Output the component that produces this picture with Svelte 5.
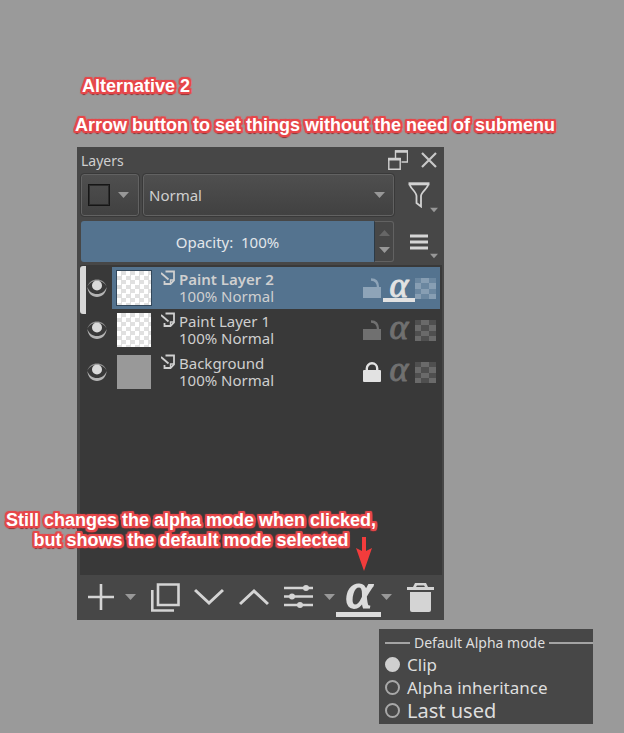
<script>
    let blendMode = $state('Normal');
    let opacity = $state(100);
    let selected = $state(2);
    let defaultMode = $state('clip');

    const blendModes = ['Normal', 'Multiply', 'Screen', 'Overlay'];

    let layers = $state([
        { id: 2, name: 'Paint Layer 2', visible: true, locked: false, alpha: true, fill: 'empty' },
        { id: 1, name: 'Paint Layer 1', visible: true, locked: false, alpha: false, fill: 'empty' },
        { id: 0, name: 'Background', visible: true, locked: true, alpha: false, fill: 'solid' }
    ]);

    const alphaModes = [
        { value: 'clip', label: 'Clip' },
        { value: 'inherit', label: 'Alpha inheritance' },
        { value: 'last', label: 'Last used' }
    ];

    function step(amount) {
        opacity = Math.min(100, Math.max(0, opacity + amount));
    }
</script>

{#snippet caret()}
    <svg class="caret" width="11" height="6" viewBox="0 0 11 6" aria-hidden="true">
        <path d="M0 0h11L5.5 6z" fill="currentColor" />
    </svg>
{/snippet}

<main>
    <h1 class="note">Alternative 2</h1>
    <p class="note">Arrow button to set things without the need of submenu</p>

    <section class="docker">
        <header class="titlebar">
            <h2>Layers</h2>
            <button class="icon" aria-label="Float docker">
                <svg width="20" height="20" viewBox="0 0 20 20" fill="none" stroke="#d0d0d0">
                    <path d="M7.5 8V1h12v11h-6" stroke-width="1.4" />
                    <path d="M7 1.5h13M0 9.2h13" stroke-width="2.6" />
                    <path d="M0.8 8.5h11.4v10.7H0.8z" stroke-width="1.4" />
                </svg>
            </button>
            <button class="icon" aria-label="Close docker">
                <svg width="16" height="16" viewBox="0 0 16 16" fill="none" stroke="#c8c8c8" stroke-width="2.2">
                    <path d="M1 1l14 14M15 1L1 15" />
                </svg>
            </button>
        </header>

        <div class="tools">
            <button class="box swatch" aria-label="Layer color label">
                <span class="color"></span>
                {@render caret()}
            </button>
            <div class="blend">
                <select class="box" bind:value={blendMode} aria-label="Blending mode">
                    {#each blendModes as mode}
                        <option>{mode}</option>
                    {/each}
                </select>
                {@render caret()}
            </div>
            <button class="icon side" aria-label="Filter layers">
                <svg width="22" height="26" viewBox="0 0 22 26" fill="none" stroke="#d2d2d2">
                    <path d="M1.8 2.5C2 6 8.5 10 8.5 14v7l4.5 3.5V14c0-4 7-8 7.2-11.5" stroke-width="1.8" />
                    <path d="M0.5 1.8h21" stroke-width="3" />
                </svg>
                {@render caret()}
            </button>
        </div>

        <div class="tools slim">
            <div class="opacity">
                <input id="opacity" type="range" min="0" max="100" bind:value={opacity} style="--level: {opacity}%" />
                <label for="opacity">Opacity:&nbsp; {opacity}%</label>
            </div>
            <div class="spin">
                <button class="icon up" aria-label="Increase opacity" onclick={() => step(1)}>{@render caret()}</button>
                <button class="icon" aria-label="Decrease opacity" onclick={() => step(-1)}>{@render caret()}</button>
            </div>
            <button class="icon side" aria-label="Layer list options">
                <svg width="18" height="16" viewBox="0 0 18 16" stroke="#d6d6d6" stroke-width="3">
                    <path d="M0 2h18M0 8h18M0 14h18" />
                </svg>
                {@render caret()}
            </button>
        </div>

        <ul class="layers">
            {#each layers as layer (layer.id)}
                <li class:selected={layer.id === selected}>
                    <button class="icon eye" aria-label="Toggle visibility" onclick={() => (layer.visible = !layer.visible)}>
                        <svg width="20" height="20" viewBox="0 0 20 20">
                            <path d="M0.3 8.5C2 4 5.5 1.500 10 1.500s8 2.500 9.700 7C17.500 5 14 2.800 10 2.800S2.500 5 0.300 8.500z" fill="#909090" />
                            <path d="M0.3 9C2 13.5 5.500 16 10 16s8-2.500 9.700-7C19 15.500 15 19 10 19S1 15.500 0.300 9z" fill="#b4b4b4" />
                            {#if layer.visible}
                                <circle cx="10" cy="7.5" r="5" fill="#dadada" />
                            {/if}
                        </svg>
                    </button>
                    <div class="row">
                        <span class="thumb {layer.fill}"></span>
                        <svg class="kind" width="16" height="16" viewBox="0 0 16 16" fill="none" stroke="#d0d0d0" stroke-width="1.8">
                            <path d="M4.500 1.500H13v9L9.500 14H3.500v-3" />
                            <path d="M13 10H9.500v3.500" stroke-width="1.4" />
                            <path d="M0 3l7.500 6.500" />
                        </svg>
                        <button class="name" onclick={() => (selected = layer.id)}>
                            <strong>{layer.name}</strong>
                            <span>100% {blendMode}</span>
                        </button>
                        <button class="icon flag" class:on={layer.locked} aria-label="Lock layer" onclick={() => (layer.locked = !layer.locked)}>
                            <svg width="18" height="20" viewBox="0 0 18 20">
                                {#if layer.locked}
                                    <path d="M3.8 10V6.5a5.2 5.2 0 0 1 10.4 0V10" fill="none" stroke="currentColor" stroke-width="2.4" />
                                    <rect y="8" width="18" height="12" rx="1" fill="currentColor" />
                                {:else}
                                    <path d="M8 1.5c5 0 7 3 7 8" fill="none" stroke="currentColor" stroke-width="2.4" />
                                    <rect y="9" width="18" height="11" fill="currentColor" />
                                {/if}
                            </svg>
                        </button>
                        <button class="icon flag alpha" class:on={layer.alpha} aria-label="Inherit alpha" onclick={() => (layer.alpha = !layer.alpha)}>α</button>
                        <button class="icon flag" aria-label="Alpha lock">
                            <svg width="21" height="21" viewBox="0 0 21 21" fill="currentColor">
                                <path d="M0 0h21v21H0z" opacity="0.4" />
                                <path d="M6 0h8v5H6zM0 5h6v6H0zM14 5h7v6h-7zM6 11h8v5H6zM0 16h6v5H0zM14 16h7v5h-7z" opacity="0.8" />
                            </svg>
                        </button>
                    </div>
                </li>
            {/each}
        </ul>

        <footer class="actions">
            <div class="group">
                <button class="icon" aria-label="Add layer">
                    <svg width="26" height="26" viewBox="0 0 26 26" stroke="#d4d4d4" stroke-width="2.6"><path d="M13 0v26M0 13h26" /></svg>
                </button>
                <button class="icon" aria-label="Layer types">{@render caret()}</button>
            </div>
            <button class="icon" aria-label="Duplicate layer">
                <svg width="29" height="29" viewBox="0 0 29 29" fill="none" stroke="#d4d4d4" stroke-width="2.6">
                    <path d="M7 1.5h20.5V22H7zM1.3 7v20.5H23" />
                </svg>
            </button>
            <button class="icon" aria-label="Move layer down">
                <svg width="30" height="18" viewBox="0 0 30 18" fill="none" stroke="#d4d4d4" stroke-width="3"><path d="M1 2l14 13L29 2" /></svg>
            </button>
            <button class="icon" aria-label="Move layer up">
                <svg width="30" height="18" viewBox="0 0 30 18" fill="none" stroke="#d4d4d4" stroke-width="3"><path d="M1 16L15 3l14 13" /></svg>
            </button>
            <div class="group">
                <button class="icon" aria-label="Layer properties">
                    <svg width="29" height="24" viewBox="0 0 29 24" stroke="#d4d4d4" stroke-width="2.6" fill="#d4d4d4">
                        <path d="M0 3h29M0 11.5h29M0 20h29" />
                        <g stroke="none">
                            <circle cx="22" cy="3" r="3" /><circle cx="8" cy="11.5" r="3" /><circle cx="16" cy="20" r="3" />
                        </g>
                    </svg>
                </button>
                <button class="icon" aria-label="Properties menu">{@render caret()}</button>
            </div>
            <div class="group joined">
                <button class="icon alpha-mode" aria-label="Change alpha mode">α</button>
                <button class="icon" aria-label="Choose default alpha mode">{@render caret()}</button>
            </div>
            <button class="icon" aria-label="Delete layer">
                <svg width="27" height="29" viewBox="0 0 27 29" fill="#d4d4d4">
                    <path d="M0 4h6l2-4h11l2 4h6v3H0zM9 4h9l-1-1.5h-7z" fill-rule="evenodd" />
                    <path d="M3 9h21v18q0 2-2 2H5q-2 0-2-2z" />
                </svg>
            </button>
        </footer>

        <div class="hint">
            <p class="note">Still changes the alpha mode when clicked,<br />but shows the default mode selected</p>
        </div>
        <svg class="pointer" width="18" height="36" viewBox="0 0 18 36" fill="#f23c3c" aria-hidden="true">
            <path d="M7 1h4v14l6-3L9 35 1 12l6 3z" />
        </svg>
    </section>

    <fieldset class="menu">
        <legend>Default Alpha mode</legend>
        {#each alphaModes as mode}
            <label>
                <input type="radio" name="alpha-mode" value={mode.value} bind:group={defaultMode} />
                {mode.label}
            </label>
        {/each}
    </fieldset>
</main>

<style>
    :global(body) {
        margin: 0;
        background: #9a9a9a;
    }

    main {
        box-sizing: border-box;
        min-height: 100vh;
        padding: 76px 16px 8px 77px;
        font-family: 'Noto Sans', 'Open Sans', sans-serif;
        font-size: 15px;
        color: #cfcfcf;
    }

    h1, h2, p, ul {
        margin: 0;
        padding: 0;
    }

    button, select {
        font: inherit;
        color: inherit;
    }

    .note {
        --edge: #e6474a;
        font: bold 18px/20px 'Liberation Sans', Arial, sans-serif;
        color: #fff;
        text-shadow:
            2px 0 var(--edge), -2px 0 var(--edge), 0 2px var(--edge), 0 -2px var(--edge),
            2px 1px var(--edge), -2px 1px var(--edge), 2px -1px var(--edge), -2px -1px var(--edge),
            1px 2px var(--edge), -1px 2px var(--edge), 1px -2px var(--edge), -1px -2px var(--edge),
            2px 2px 1px var(--edge), -2px 2px 1px var(--edge), 2px -2px 1px var(--edge), -2px -2px 1px var(--edge),
            0 3px 1px #8a2c2e;
    }

    h1.note {
        margin-left: 5px;
    }

    h1 + .note {
        margin: 19px 0 12px -2px;
    }

    .docker {
        position: relative;
        box-sizing: border-box;
        max-width: 367px;
        background: #474747;
    }

    .icon {
        display: flex;
        align-items: center;
        justify-content: center;
        padding: 0;
        border: 0;
        background: none;
    }

    .caret {
        flex: none;
        color: #989898;
    }

    .titlebar {
        display: flex;
        align-items: center;
        gap: 13px;
        height: 26px;
        margin-bottom: 1px;
        padding: 0 7px 0 4px;
    }

    h2 {
        flex: 1;
        font-size: 14px;
        font-weight: 400;
    }

    .tools {
        display: flex;
        gap: 4px;
        height: 42px;
        padding: 0 0 0 4px;
        margin-bottom: 5px;
    }

    .tools.slim {
        gap: 0;
        height: 41px;
        margin-bottom: 3px;
    }

    .box {
        border: 1px solid #626262;
        border-radius: 3px;
        outline: 1px solid #393939;
        background: linear-gradient(#4f4f4f, #414141);
    }

    .swatch {
        display: flex;
        align-items: center;
        gap: 8px;
        width: 58px;
        padding: 0 6px;
    }

    .color {
        width: 20px;
        height: 20px;
        border: 1px solid #161616;
        outline: 1px solid #2c2c2c;
        outline-offset: -2px;
    }

    .blend {
        display: grid;
        flex: 1;
        align-items: center;
    }

    .blend select {
        grid-area: 1 / 1;
        height: 100%;
        padding: 0 5px;
        appearance: none;
    }

    .blend .caret {
        grid-area: 1 / 1;
        justify-self: end;
        margin-right: 9px;
        pointer-events: none;
    }

    .side {
        position: relative;
        width: 46px;
        padding-right: 4px;
    }

    .slim .side {
        width: 50px;
        padding-right: 0;
    }

    .side .caret {
        position: absolute;
        right: 6px;
        bottom: 3px;
        width: 8px;
    }

    .opacity {
        display: grid;
        flex: 1;
        align-items: center;
    }

    .opacity input {
        grid-area: 1 / 1;
        width: 100%;
        height: 100%;
        margin: 0;
        appearance: none;
        border-radius: 3px 0 0 3px;
        background: linear-gradient(#54738f, #54738f) 0 0 / var(--level) 100% no-repeat #383838;
    }

    .opacity input::-webkit-slider-thumb {
        appearance: none;
        width: 1px;
        height: 1px;
    }

    .opacity label {
        grid-area: 1 / 1;
        z-index: 1;
        justify-self: center;
        color: #e2e6ea;
        pointer-events: none;
    }

    .spin {
        display: grid;
        box-sizing: border-box;
        width: 20px;
        padding: 3px 0;
        border: 1px solid #626262;
        border-left: 1px solid #2c3a46;
        border-radius: 0 3px 3px 0;
    }

    .spin .up .caret {
        color: #666;
        rotate: 180deg;
    }

    .layers {
        box-sizing: border-box;
        min-height: 310px;
        margin: 0 2px 0 3px;
        padding-top: 2px;
        list-style: none;
        background: #393939;
    }

    li {
        display: flex;
        height: 42px;
    }

    .eye {
        box-sizing: border-box;
        width: 32px;
        padding-right: 5px;
        border-left: 6px solid transparent;
    }

    .selected .eye {
        height: 48px;
        margin-top: -1px;
        padding-bottom: 4px;
        border-radius: 3px 0 0 3px;
        border-color: #d8d8d8;
    }

    .row {
        display: flex;
        flex: 1;
        align-items: center;
        box-sizing: border-box;
        height: 42px;
        margin-right: 2px;
        padding: 0 4px 0 5px;
    }

    .selected .row {
        background: #54738f;
    }

    .thumb {
        width: 34px;
        height: 34px;
    }

    .selected .thumb {
        outline: 1px solid #33475a;
    }

    .empty {
        background: repeating-conic-gradient(#e0e0e0 0 25%, #fff 0 50%) 0 0 / 9px 9px;
    }

    .solid {
        background: #999;
    }

    .kind {
        align-self: flex-start;
        margin: 3px 2px 0 10px;
    }

    .name {
        display: flex;
        flex: 1;
        flex-direction: column;
        padding: 0;
        border: 0;
        background: none;
        line-height: 17px;
        text-align: left;
    }

    .name strong {
        font-weight: 400;
    }

    .selected .name strong {
        font-weight: 600;
    }

    .flag {
        color: #707070;
    }

    .selected .flag {
        color: #8ea4b8;
    }

    .flag.on, .selected .flag.on {
        color: #e2e2e2;
    }

    .alpha {
        box-sizing: border-box;
        width: 32px;
        height: 28px;
        margin: 0 0 0 2px;
        border-bottom: 4px solid transparent;
        font: italic 36px/20px 'Liberation Serif', serif;
        -webkit-text-stroke: 1px currentColor;
    }

    .alpha, .selected .alpha.on {
        padding-bottom: 3px;
    }

    .alpha.on {
        border-color: #e2e2e2;
    }

    .actions {
        display: flex;
        align-items: center;
        justify-content: space-between;
        height: 44px;
        padding: 0 10px 1px 11px;
    }

    .group {
        display: flex;
        gap: 11px;
    }

    .group.joined {
        gap: 0;
        margin-left: -13px;
    }

    .alpha-mode {
        box-sizing: border-box;
        width: 45px;
        height: 40px;
        padding-bottom: 7px;
        border-bottom: 5px solid #dcdcdc;
        font: italic 50px/28px 'Liberation Serif', serif;
        color: #dcdcdc;
        -webkit-text-stroke: 2px currentColor;
    }

    .hint {
        position: absolute;
        left: -74px;
        bottom: 70px;
        width: 376px;
        text-align: center;
    }

    .pointer {
        position: absolute;
        right: 71px;
        bottom: 48px;
    }

    .menu {
        display: flex;
        flex-direction: column;
        box-sizing: border-box;
        width: 214px;
        margin: 9px 0 0 302px;
        padding: 4px 0 2px 6px;
        border: 0;
        background: #474747;
        font-size: 17px;
        line-height: 23px;
        color: #dedede;
    }

    legend {
        display: flex;
        float: left;
        align-items: center;
        gap: 4px;
        width: 100%;
        padding: 0;
        font-size: 14px;
        line-height: 20px;
    }

    legend::before, legend::after {
        content: '';
        width: 25px;
        height: 2px;
        background: #a4a4a4;
    }

    legend::after {
        flex: 1;
    }

    .menu label {
        display: flex;
        align-items: center;
        gap: 7px;
    }

    .menu label:last-child {
        font-size: 20px;
    }

    .menu input {
        width: 15px;
        height: 15px;
        margin: 0;
        appearance: none;
        border: 2px solid #a8a8a8;
        border-radius: 50%;
    }

    .menu input:checked {
        border-color: #cfcfcf;
        background: #cfcfcf;
    }
</style>
